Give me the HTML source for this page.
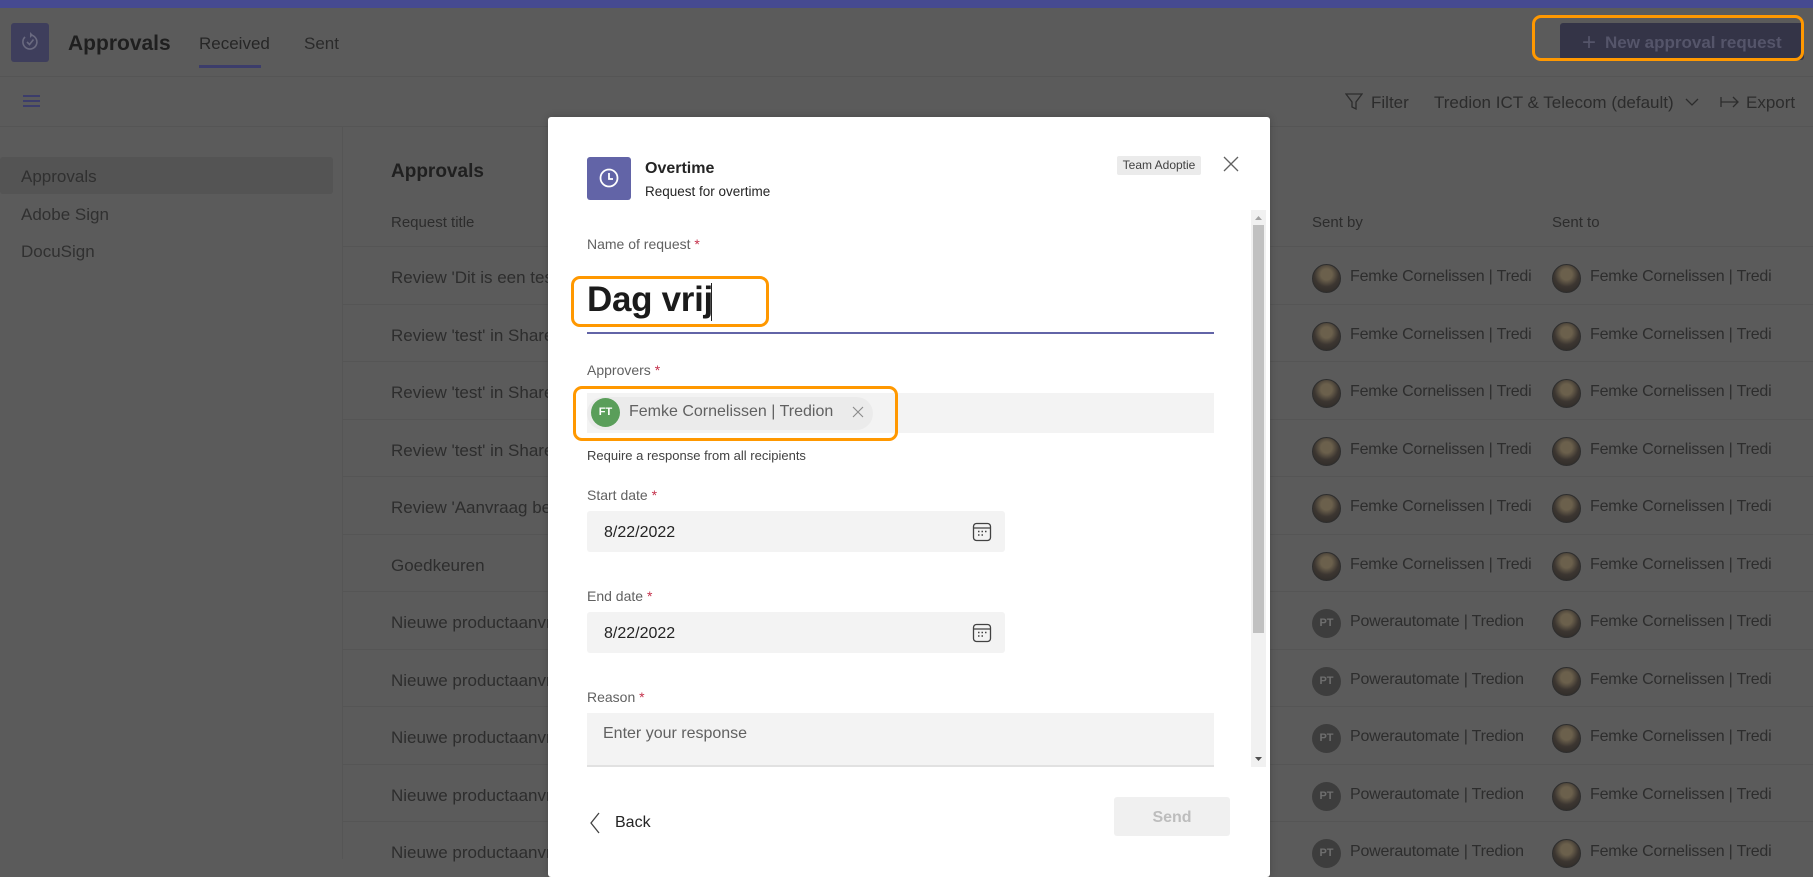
<!DOCTYPE html>
<html><head><meta charset="utf-8"><style>
*{box-sizing:border-box;margin:0;padding:0}
body{width:1813px;height:859px;overflow:hidden;background:#5b5b5b;font-family:"Segoe UI","Liberation Sans",sans-serif;position:relative;color:#2c2c2c}
.a{position:absolute;white-space:nowrap}
.row{position:absolute;left:342px;right:0;height:1px;background:#555}
.av{position:absolute;width:29px;height:29px;border-radius:50%;background:radial-gradient(circle at 50% 35%,#6b604c 0 25%,#3c3631 55%,#2a2826 100%);border:1px solid #2e2e2e}
.pt{position:absolute;width:29px;height:29px;border-radius:50%;background:#3d3d3d;color:#6e6e6e;font-size:11px;font-weight:bold;text-align:center;line-height:29px}
.nm{position:absolute;font-size:17px;color:#2d2d2d;white-space:nowrap;overflow:hidden}
.nm2{position:absolute;font-size:16px;letter-spacing:-0.2px;color:#2d2d2d;white-space:nowrap;overflow:hidden}
.lbl{position:absolute;left:587px;font-size:14px;color:#616161}
.lbl b{color:#c4314b;font-weight:normal}
</style></head><body>
<div class="a" style="left:0;top:0;width:1813px;height:8px;background:#464a91"></div>
<div class="a" style="left:0;top:76px;width:1813px;height:1px;background:#555"></div>
<div class="a" style="left:0;top:126px;width:1813px;height:1px;background:#555"></div>
<div class="a" style="left:11px;top:23px;width:38px;height:39px;background:#3e3e5c;border-radius:3px"></div>
<svg class="a" style="left:19px;top:31px" width="22" height="22" viewBox="0 0 22 22"><path d="M6 6 A7 7 0 1 0 11 4" fill="none" stroke="#6a6a80" stroke-width="1.6"/><path d="M11 1 L11 7 L14 4Z" fill="#6a6a80"/><path d="M8 11 l2.5 2.5 4-5" fill="none" stroke="#6a6a80" stroke-width="1.6"/></svg>
<div class="a" style="left:68px;top:32px;font-size:21px;font-weight:bold;color:#1f1f1f">Approvals</div>
<div class="a" style="left:199px;top:34px;font-size:17px;color:#262626">Received</div>
<div class="a" style="left:199px;top:65px;width:62px;height:3px;background:#3c3d6b"></div>
<div class="a" style="left:304px;top:34px;font-size:17px;color:#2a2a2a">Sent</div>
<div class="a" style="left:1560px;top:23px;width:244px;height:37px;background:#343447;border-radius:3px"></div>
<div class="a" style="left:1582px;top:29px;font-size:24px;color:#55556a;font-weight:300">+</div>
<div class="a" style="left:1605px;top:33px;font-size:17px;font-weight:bold;color:#55556a">New approval request</div>
<div class="a" style="left:1532px;top:15px;width:272px;height:46px;border:3px solid #ff9800;border-radius:9px"></div>
<div class="a" style="left:23px;top:95px;width:17px;height:2px;background:#3c3d6b;box-shadow:0 5px 0 #3c3d6b,0 10px 0 #3c3d6b"></div>
<svg class="a" style="left:1345px;top:93px" width="18" height="18" viewBox="0 0 18 18"><path d="M1 1 H17 L11 9 V16 L7 14 V9Z" fill="none" stroke="#2c2c2c" stroke-width="1.3"/></svg>
<div class="a" style="left:1371px;top:93px;font-size:17px">Filter</div>
<div class="a" style="left:1434px;top:93px;font-size:17px">Tredion ICT &amp; Telecom (default)</div>
<svg class="a" style="left:1685px;top:97px" width="14" height="10"><path d="M1 2 L7 8 L13 2" fill="none" stroke="#2c2c2c" stroke-width="1.3"/></svg>
<svg class="a" style="left:1720px;top:96px" width="20" height="12"><path d="M1 1 V11 M1 6 H18 M13 1 L18 6 L13 11" fill="none" stroke="#2c2c2c" stroke-width="1.3"/></svg>
<div class="a" style="left:1746px;top:93px;font-size:17px">Export</div>
<div class="a" style="left:342px;top:127px;width:1px;height:732px;background:#555"></div>
<div class="a" style="left:0;top:157px;width:333px;height:37px;background:#545454;border-radius:3px"></div>
<div class="a" style="left:21px;top:167px;font-size:17px;color:#303030">Approvals</div>
<div class="a" style="left:21px;top:205px;font-size:17px;color:#303030">Adobe Sign</div>
<div class="a" style="left:21px;top:242px;font-size:17px;color:#303030">DocuSign</div>
<div class="a" style="left:391px;top:161px;font-size:19px;font-weight:bold;color:#202020">Approvals</div>
<div class="a" style="left:391px;top:214px;font-size:15px">Request title</div>
<div class="a" style="left:1312px;top:214px;font-size:15px">Sent by</div>
<div class="a" style="left:1552px;top:214px;font-size:15px">Sent to</div>
<div id="rows"></div>
<script>
var t=["Review 'Dit is een test","Review 'test' in Share","Review 'test' in Share","Review 'test' in Share","Review 'Aanvraag beh","Goedkeuren","Nieuwe productaanvr","Nieuwe productaanvr","Nieuwe productaanvr","Nieuwe productaanvr","Nieuwe productaanvr"];
var h="";
for(var i=0;i<11;i++){var y=278+i*57.5;
h+='<div class="row" style="top:'+(y-32)+'px"></div>';
h+='<div class="nm" style="left:391px;top:'+(y-10)+'px">'+t[i]+'</div>';
if(i<6)h+='<div class="av" style="left:1312px;top:'+(y-14)+'px"></div><div class="nm2" style="left:1350px;top:'+(y-10)+'px;width:188px">Femke Cornelissen | Tredi</div>';
else h+='<div class="pt" style="left:1312px;top:'+(y-14)+'px">PT</div><div class="nm2" style="left:1350px;top:'+(y-10)+'px">Powerautomate | Tredion</div>';
h+='<div class="av" style="left:1552px;top:'+(y-14)+'px"></div><div class="nm2" style="left:1590px;top:'+(y-10)+'px;width:187px">Femke Cornelissen | Tredi</div>';}
document.getElementById('rows').innerHTML=h;
</script>
<div class="a" style="left:548px;top:117px;width:722px;height:760px;background:#fff;border-radius:3px;box-shadow:0 0 8px rgba(0,0,0,.2)"></div>
<div class="a" style="left:587px;top:157px;width:44px;height:43px;background:#6264a7;border-radius:3px"></div>
<svg class="a" style="left:598px;top:167px" width="22" height="22"><circle cx="11" cy="11" r="8.5" fill="none" stroke="#fff" stroke-width="1.8"/><path d="M11 6 V12 H15" fill="none" stroke="#fff" stroke-width="1.8"/></svg>
<div class="a" style="left:645px;top:160px;font-size:16px;font-weight:bold;color:#242424">Overtime</div>
<div class="a" style="left:645px;top:184px;font-size:13.5px;color:#242424">Request for overtime</div>
<div class="a" style="left:1117px;top:156px;width:84px;height:19px;background:#ebebeb;border-radius:2px;font-size:12px;color:#424242;text-align:center;line-height:19px">Team Adoptie</div>
<svg class="a" style="left:1223px;top:156px" width="16" height="16"><path d="M1 1 L15 15 M15 1 L1 15" stroke="#616161" stroke-width="1.3"/></svg>
<div class="a" style="left:1251px;top:210px;width:15px;height:557px;background:#f1f1f1"></div>
<div class="a" style="left:1253px;top:225px;width:11px;height:408px;background:#c1c1c1"></div>
<svg class="a" style="left:1253px;top:214px" width="11" height="8"><path d="M2 6 L5.5 2 L9 6Z" fill="#a3a3a3"/></svg>
<svg class="a" style="left:1253px;top:755px" width="11" height="8"><path d="M2 2 L5.5 6 L9 2Z" fill="#505050"/></svg>
<div class="lbl" style="top:236px">Name of request <b>*</b></div>
<div class="a" style="left:587px;top:280px;font-size:35px;letter-spacing:-0.3px;font-weight:bold;color:#1b1b1b;font-family:'Liberation Sans',sans-serif">Dag vrij</div>
<div class="a" style="left:711px;top:283px;width:1px;height:38px;background:#222"></div>
<div class="a" style="left:571px;top:276px;width:198px;height:51px;border:3px solid #ff9800;border-radius:9px"></div>
<div class="a" style="left:587px;top:332px;width:627px;height:2px;background:#6264a7"></div>
<div class="lbl" style="top:362px">Approvers <b>*</b></div>
<div class="a" style="left:587px;top:393px;width:627px;height:40px;background:#f3f3f3"></div>
<div class="a" style="left:587px;top:397px;width:286px;height:33px;background:#ebebeb;border-radius:17px"></div>
<div class="a" style="left:591px;top:398px;width:29px;height:29px;border-radius:50%;background:#5a9e5a;color:#fff;font-size:11px;font-weight:bold;text-align:center;line-height:29px">FT</div>
<div class="a" style="left:629px;top:403px;font-size:16px;color:#616161">Femke Cornelissen | Tredion</div>
<svg class="a" style="left:852px;top:406px" width="12" height="12"><path d="M1 1 L11 11 M11 1 L1 11" stroke="#8a8a8a" stroke-width="1.1"/></svg>
<div class="a" style="left:573px;top:386px;width:325px;height:55px;border:3px solid #ff9800;border-radius:9px"></div>
<div class="a" style="left:587px;top:448px;font-size:13px;color:#424242">Require a response from all recipients</div>
<div class="lbl" style="top:487px">Start date <b>*</b></div>
<div class="a" style="left:587px;top:511px;width:418px;height:41px;background:#f3f3f3;border-radius:3px"></div>
<div class="a" style="left:604px;top:524px;font-size:16px;color:#242424">8/22/2022</div>
<div class="lbl" style="top:588px">End date <b>*</b></div>
<div class="a" style="left:587px;top:612px;width:418px;height:41px;background:#f3f3f3;border-radius:3px"></div>
<div class="a" style="left:604px;top:625px;font-size:16px;color:#242424">8/22/2022</div>
<svg class="a" style="left:972px;top:522px" width="20" height="20"><rect x="1.5" y="1.5" width="17" height="17" rx="3" fill="none" stroke="#424242" stroke-width="1.3"/><path d="M1.5 6 H18.5" stroke="#424242" stroke-width="1.3"/><path d="M6 9.5h1.5M9.5 9.5h1.5M13 9.5h1.5M6 13h1.5M9.5 13h1.5" stroke="#424242" stroke-width="1.5"/></svg>
<svg class="a" style="left:972px;top:623px" width="20" height="20"><rect x="1.5" y="1.5" width="17" height="17" rx="3" fill="none" stroke="#424242" stroke-width="1.3"/><path d="M1.5 6 H18.5" stroke="#424242" stroke-width="1.3"/><path d="M6 9.5h1.5M9.5 9.5h1.5M13 9.5h1.5M6 13h1.5M9.5 13h1.5" stroke="#424242" stroke-width="1.5"/></svg>
<div class="lbl" style="top:689px">Reason <b>*</b></div>
<div class="a" style="left:587px;top:713px;width:627px;height:54px;background:#f3f3f3;border-bottom:2px solid #e1e1e1"></div>
<div class="a" style="left:603px;top:725px;font-size:16px;color:#616161">Enter your response</div>
<svg class="a" style="left:589px;top:812px" width="12" height="22"><path d="M10 1 L2 11 L10 21" fill="none" stroke="#424242" stroke-width="1.3"/></svg>
<div class="a" style="left:615px;top:814px;font-size:16px;color:#242424">Back</div>
<div class="a" style="left:1114px;top:797px;width:116px;height:39px;background:#f0f0f0;border-radius:3px;color:#bdbdbd;font-weight:bold;font-size:16px;text-align:center;line-height:41px">Send</div>
</body></html>
